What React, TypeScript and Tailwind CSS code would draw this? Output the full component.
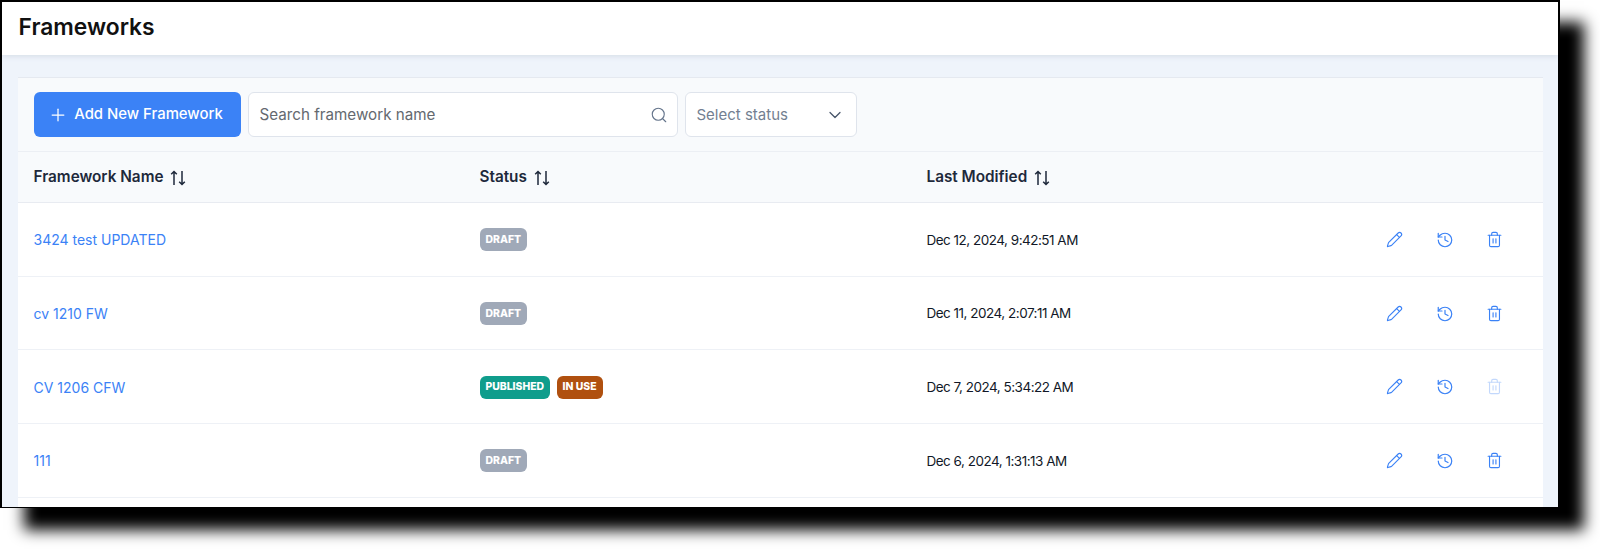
import { ChevronDown, History, Pencil, Plus, Search, Trash2 } from "lucide-react";

const rows = [
  { name: "3424 test UPDATED", badges: ["DRAFT"], date: "Dec 12, 2024, 9:42:51 AM" },
  { name: "cv 1210 FW", badges: ["DRAFT"], date: "Dec 11, 2024, 2:07:11 AM" },
  { name: "CV 1206 CFW", badges: ["PUBLISHED", "IN USE"], date: "Dec 7, 2024, 5:34:22 AM", locked: true },
  { name: "111", badges: ["DRAFT"], date: "Dec 6, 2024, 1:31:13 AM" },
];

function Badge({ label }: { label: string }) {
  let color = "bg-[#a0a9b8]";
  if (label === "PUBLISHED") color = "bg-[#0f9d8c]";
  if (label === "IN USE") color = "bg-[#b0500f]";
  return (
    <span className={`${color} flex h-[23px] items-center rounded-[6px] px-[6px] text-[10.4px] font-extrabold text-white`}>
      {label}
    </span>
  );
}

function SortIcon() {
  return (
    <svg width="16" height="16" viewBox="0 0 16 16" fill="none" stroke="currentColor" strokeWidth="1.5">
      <path d="M4 15V1.5M1.2 4.3 4 1.5l2.8 2.8" />
      <path d="M12 1v13.5M9.2 11.7l2.8 2.8 2.8-2.8" />
    </svg>
  );
}

function HeadCell({ label }: { label: string }) {
  return (
    <div className="flex items-center gap-[7px] text-[15.3px] font-semibold text-[#1e293b]">
      {label}
      <SortIcon />
    </div>
  );
}

export default function App() {
  return (
    <div className="h-[549px] w-[1600px] overflow-hidden bg-white font-['Inter',sans-serif]">
      <div className="flex h-[508px] w-[1560px] flex-col overflow-hidden border-[2.5px] border-b-[1.5px] border-black bg-[#eff4fb] shadow-[24px_22px_14px_#000]">
        <header className="flex h-[52.5px] shrink-0 items-center bg-white pb-[2px] pl-[16.5px] text-[22.8px] font-semibold text-[#111] shadow-[0_1px_6px_rgba(100,116,139,0.2)]">
          Frameworks
        </header>

        <main className="mt-[22px] ml-[15.5px] w-[1525px] flex-1 border-t border-[#e5e9f0] bg-white">
          <div className="flex h-[74px] items-center gap-[7px] border-b border-[#eceff4] bg-[#f8fafc] px-[16px]">
            <button className="flex h-[45px] w-[207px] items-center justify-center gap-[6px] rounded-[6px] bg-[#3b82f6] pt-[1px] pr-[3px] text-[14.9px] font-medium text-white">
              <Plus size={20} strokeWidth={1.5} />
              Add New Framework
            </button>
            <div className="flex h-[45px] w-[430px] items-center justify-between rounded-[6px] border border-[#dfe4ec] bg-white pt-[2px] pr-[9px] pl-[11px] text-[15.2px] text-[#64696f]">
              Search framework name
              <Search size={18} strokeWidth={1.5} className="text-[#64748b]" />
            </div>
            <div className="flex h-[45px] w-[172px] items-center justify-between rounded-[6px] border border-[#dfe4ec] bg-white px-[11px] pt-[2px] text-[15px] text-[#737f91]">
              Select status
              <ChevronDown size={20} strokeWidth={1.5} className="text-[#475569]" />
            </div>
          </div>

          <div className="grid h-[51.5px] grid-cols-[446px_447px_1fr] items-center border-b border-[#e8ebf1] bg-[#f8fafc] px-[16px] pt-[2px]">
            <HeadCell label="Framework Name" />
            <HeadCell label="Status" />
            <HeadCell label="Last Modified" />
          </div>

          {rows.map((row) => (
            <div
              key={row.name}
              className="grid h-[73.7px] grid-cols-[446px_447px_1fr_157px] items-center border-b border-[#eef1f6] px-[16px] pt-[1px] text-[14px]"
            >
              <a className="text-[#3b82f6]">{row.name}</a>
              <div className="flex gap-[6.5px]">
                {row.badges.map((b) => (
                  <Badge key={b} label={b} />
                ))}
              </div>
              <div className="text-[13.5px] tracking-[-0.5px] text-[#111827]">{row.date}</div>
              <div className="flex justify-end pr-[7px] text-[#3b82f6]">
                <span className="flex w-[50px] justify-center">
                  <Pencil size={17} strokeWidth={1.6} />
                </span>
                <span className="flex w-[50px] justify-center">
                  <History size={18} strokeWidth={1.6} />
                </span>
                <span className="flex w-[50px] justify-center">
                  <Trash2 size={17} strokeWidth={1.6} className={row.locked ? "opacity-30" : ""} />
                </span>
              </div>
            </div>
          ))}
        </main>
      </div>
    </div>
  );
}
